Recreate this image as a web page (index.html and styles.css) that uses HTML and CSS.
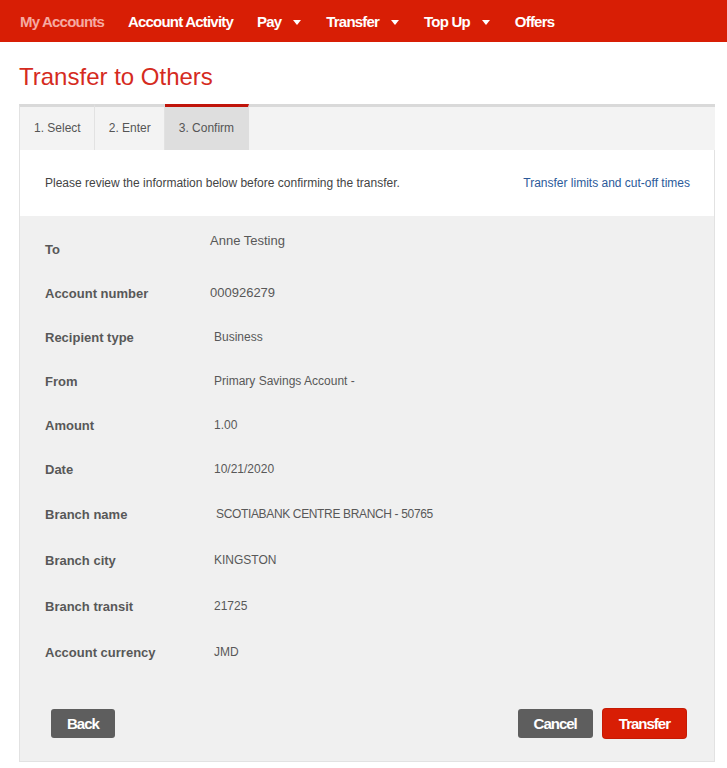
FILE: index.html
```html
<!DOCTYPE html>
<html lang="en">
<head>
  <meta charset="utf-8">
  <title>Transfer to Others</title>
  <link rel="stylesheet" href="styles.css">
</head>
<body>
  <div id="nav">
    <ul class="menu">
      <li class="faded"><a href="#">My Accounts</a></li>
      <li><a href="#">Account Activity</a></li>
      <li><a href="#">Pay<span class="caret"></span></a></li>
      <li><a href="#">Transfer<span class="caret"></span></a></li>
      <li><a href="#">Top Up<span class="caret"></span></a></li>
      <li><a href="#">Offers</a></li>
    </ul>
  </div>

  <div class="page">
    <h1 class="title">Transfer to Others</h1>

    <div class="panel">
      <ul class="steps">
        <li>1. Select</li>
        <li>2. Enter</li>
        <li class="on">3. Confirm</li>
      </ul>

      <div class="notice">
        <span>Please review the information below before confirming the transfer.</span>
        <a href="#">Transfer limits and cut-off times</a>
      </div>

      <div class="details">
        <div class="row">
          <span class="label">To</span>
          <span class="val big up">Anne Testing</span>
        </div>
        <div class="row">
          <span class="label">Account number</span>
          <span class="val big">000926279</span>
        </div>
        <div class="row">
          <span class="label">Recipient type</span>
          <span class="val">Business</span>
        </div>
        <div class="row">
          <span class="label">From</span>
          <span class="val">Primary Savings Account -</span>
        </div>
        <div class="row">
          <span class="label">Amount</span>
          <span class="val">1.00</span>
        </div>
        <div class="row">
          <span class="label">Date</span>
          <span class="val">10/21/2020</span>
        </div>
        <div class="row tall">
          <span class="label">Branch name</span>
          <span class="val far">SCOTIABANK CENTRE BRANCH - 50765</span>
        </div>
        <div class="row tall">
          <span class="label">Branch city</span>
          <span class="val">KINGSTON</span>
        </div>
        <div class="row tall">
          <span class="label">Branch transit</span>
          <span class="val">21725</span>
        </div>
        <div class="row tall">
          <span class="label">Account currency</span>
          <span class="val">JMD</span>
        </div>

        <div class="actions">
          <a class="btn grey" href="#">Back</a>
          <div class="right">
            <a class="btn grey" href="#">Cancel</a>
            <a class="btn red" href="#">Transfer</a>
          </div>
        </div>
      </div>
    </div>
  </div>
</body>
</html>
```

FILE: styles.css
```css
body{
    margin:0;
    font-family:"Liberation Sans", Arial, sans-serif;
    color:#555;
    background:#fff;
}
a{text-decoration:none}

/* top menu */
#nav{height:42px; background:#d81e05}
#nav ul.menu{
    display:flex;
    gap:24px;
    height:42px;
    margin:0;
    padding:0 0 0 20px;
    list-style:none;
    align-items:center;
}
#nav ul.menu li a{
    display:flex;
    align-items:center;
    color:#fff;
    font-size:15px;
    font-weight:bold;
    letter-spacing:-0.8px;
}
#nav ul.menu li.faded a{color:#f5aaa2}
#nav .caret{
    width:0;
    height:0;
    margin-left:12px;
    margin-right:1px;
    margin-top:2px;
    border-left:4px solid transparent;
    border-right:4px solid transparent;
    border-top:5px solid #fff;
}

.page{padding:0 12px 0 19px}
.title{
    margin:21px 0 13px;
    font-size:24px;
    line-height:28px;
    font-weight:normal;
    color:#d52b1e;
}

.panel{
    border-left:1px solid #e2e2e2;
    border-right:1px solid #e2e2e2;
    border-bottom:1px solid #e2e2e2;
}

/* steps */
.steps{
    display:flex;
    margin:0;
    padding:0;
    list-style:none;
    background:#f3f3f3;
    border-top:3px solid #d9d9d9;
    margin-left:-1px;
    margin-right:-1px;
}
.steps li{
    height:43px;
    line-height:43px;
    margin-top:-3px;
    padding:0 13px 0 14px;
    border-top:3px solid transparent;
    border-right:1px solid #e2e2e2;
    font-size:12px;
    color:#555;
}
.steps li:first-child{border-left:1px solid #e2e2e2}
.steps li.on{
    background:#dedede;
    border-top-color:#c0140a;
    border-right-color:#dedede;
    padding:0 14px;
}

.notice{
    display:flex;
    justify-content:space-between;
    align-items:center;
    height:66px;
    padding:0 24px 0 25px;
    background:#fff;
    font-size:12px;
    color:#444;
}
.notice a{color:#2b5a9a}

/* confirmation rows */
.details{
    background:#f0f0f0;
    padding:11px 28px 23px 25px;
}
.row{
    display:flex;
    align-items:center;
    height:44px;
}
.row.tall{height:46px}
.label{
    width:169px;
    flex:none;
    font-size:13px;
    font-weight:bold;
    color:#585858;
}
.val{
    font-size:12px;
    line-height:16px;
    color:#585858;
}
.val.big{font-size:13px; margin-left:-4px}
.val.up{align-self:flex-start; padding-top:6px}
.val.far{margin-left:2px; letter-spacing:-0.35px}

.actions{
    display:flex;
    justify-content:space-between;
    margin-top:34px;
    padding-left:6px;
}
.actions .right{display:flex; gap:10px}
.btn{
    display:block;
    height:29px;
    line-height:29px;
    padding:0 16px;
    border-radius:3px;
    color:#fff;
    font-size:15px;
    font-weight:bold;
    letter-spacing:-1px;
}
.btn.grey{background:#5e5e5e}
.btn.red{background:#d81e05; box-shadow:0 0 0 1px #c51a04}
```
